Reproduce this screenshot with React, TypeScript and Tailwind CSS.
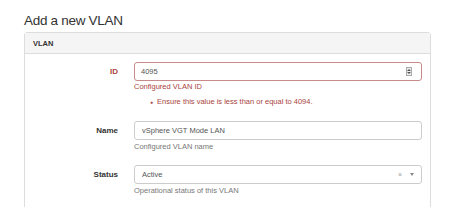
const FONT = { fontFamily: '"Liberation Sans", Arial, sans-serif' };

function Row({
  label,
  error,
  className,
  children,
}: {
  label: string;
  error?: boolean;
  className?: string;
  children: React.ReactNode;
}) {
  return (
    <div className={'flex ' + (className ?? '')}>
      <div
        className={
          'w-[109px] shrink-0 pr-4 pt-[5px] text-right text-[8px] font-bold leading-[10px] ' +
          (error ? 'text-[#a94442]' : 'text-[#333]')
        }
      >
        {label}
      </div>
      <div className="w-[288px] shrink-0">{children}</div>
    </div>
  );
}

export default function App() {
  return (
    <div className="h-[207px] w-[474px] overflow-hidden bg-white pl-6 pt-[12px]" style={FONT}>
      <h1 className="text-[13.5px] leading-[17px] tracking-[-0.3px] text-[#333]">Add a new VLAN</h1>
      <div className="mt-[3px] w-[407px] rounded-t-[3px] border border-[#ddd]">
        <div className="h-[21px] border-b border-[#ddd] bg-[#f5f5f5] pl-[8px] pt-[6px] text-[7.5px] font-bold leading-[9px] text-[#333]">
          VLAN
        </div>
        <div className="flex flex-col pt-[8px] pb-4">
          <Row label="ID" error>
            <div className="flex h-[19px] items-center justify-between rounded-[3px] border border-[#c98b8a] pl-[6px] pr-[9px] text-[7.5px] text-[#555]">
              <span>4095</span>
              <span className="flex h-[9px] w-[6px] flex-col items-center justify-center gap-[1px] border border-[#aaa] bg-[#eee]">
                <span className="h-0 w-0 border-x-[2px] border-b-[2px] border-x-transparent border-b-[#555]" />
                <span className="h-0 w-0 border-x-[2px] border-t-[2px] border-x-transparent border-t-[#555]" />
              </span>
            </div>
            <div className="mt-[1px] text-[7.5px] leading-[10px] text-[#a94442]">Configured VLAN ID</div>
            <ul className="mt-[5px] pl-[16px] text-[7.5px] leading-[10px] text-[#a94442]">
              <li>
                <span className="mr-[4px] text-[5px] align-middle">●</span>Ensure this value is less than or equal to 4094.
              </li>
            </ul>
          </Row>
          <Row label="Name" className="mt-[14px]">
            <div className="flex h-[19px] items-center rounded-[3px] border border-[#ccc] pl-[7px] text-[7.5px] text-[#555]">
              vSphere VGT Mode LAN
            </div>
            <div className="mt-[2px] text-[7.5px] leading-[10px] text-[#777]">Configured VLAN name</div>
          </Row>
          <Row label="Status" className="mt-[13px]">
            <div className="flex h-[19px] items-center justify-between rounded-[3px] border border-[#ccc] pl-[7px] pr-[7px] text-[7.5px] text-[#555]">
              <span>Active</span>
              <span className="flex items-center gap-[8px] text-[#999]">
                <span className="text-[7px] leading-none">×</span>
                <span className="h-0 w-0 border-x-[2.5px] border-t-[3px] border-x-transparent border-t-[#888]" />
              </span>
            </div>
            <div className="mt-[2px] text-[7.5px] leading-[10px] text-[#777]">Operational status of this VLAN</div>
          </Row>
        </div>
      </div>
    </div>
  );
}
